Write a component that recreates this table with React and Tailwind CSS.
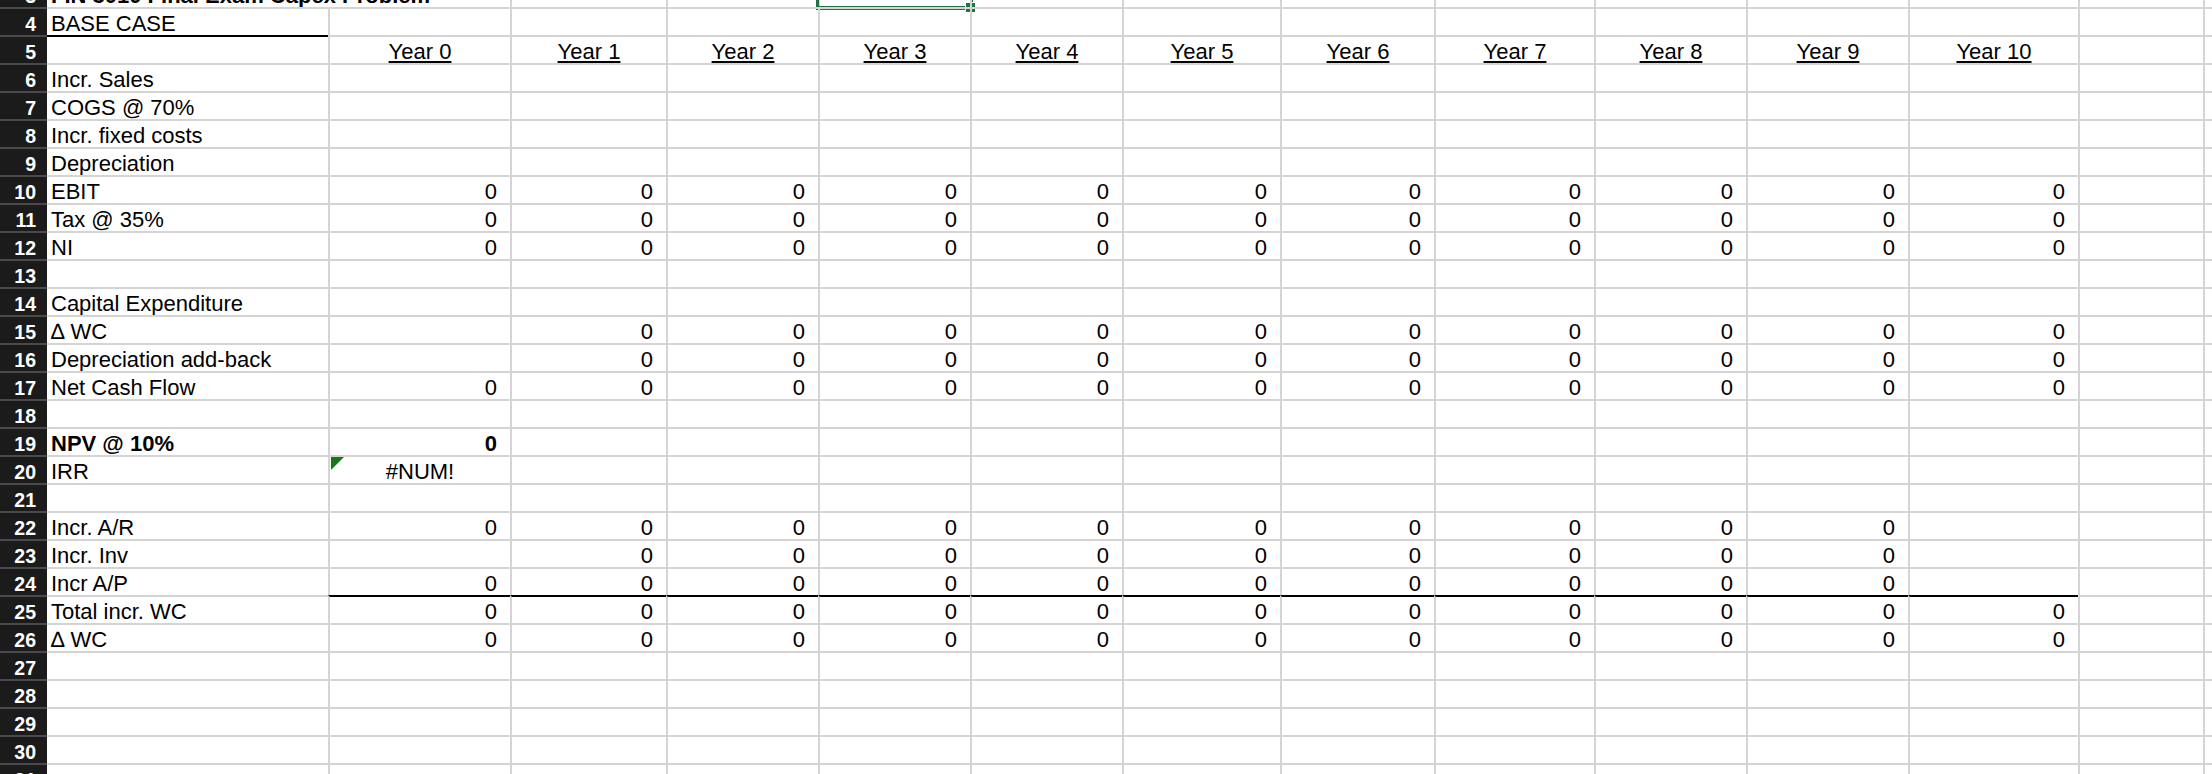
import React from "react";

const COLW = [
  "w-[281px]",
  "w-[182px]",
  "w-[156px]",
  "w-[152px]",
  "w-[152px]",
  "w-[152px]",
  "w-[158px]",
  "w-[154px]",
  "w-[160px]",
  "w-[152px]",
  "w-[162px]",
  "w-[170px]",
  "w-[125px]",
  "w-[9px]",
];

const z = (n) => Array(n).fill("0");
const nul = (n) => Array(n).fill(null);

const ROWS = [
  { n: 3, title: "FIN 3010 Final Exam Capex Problem" },
  { n: 4, label: "BASE CASE" },
  { n: 5, years: true, blackA: true },
  { n: 6, label: "Incr. Sales" },
  { n: 7, label: "COGS @ 70%" },
  { n: 8, label: "Incr. fixed costs" },
  { n: 9, label: "Depreciation" },
  { n: 10, label: "EBIT", vals: z(11) },
  { n: 11, label: "Tax @ 35%", vals: z(11) },
  { n: 12, label: "NI", vals: z(11) },
  { n: 13 },
  { n: 14, label: "Capital Expenditure" },
  { n: 15, label: "\u2206 WC", vals: [null, ...z(10)] },
  { n: 16, label: "Depreciation add-back", vals: [null, ...z(10)] },
  { n: 17, label: "Net Cash Flow", vals: z(11) },
  { n: 18 },
  { n: 19, label: "NPV @ 10%", bold: true, vals: ["0", ...nul(10)] },
  { n: 20, label: "IRR", irr: true },
  { n: 21 },
  { n: 22, label: "Incr. A/R", vals: ["0", ...z(9), null] },
  { n: 23, label: "Incr. Inv", vals: [null, ...z(9), null] },
  { n: 24, label: "Incr A/P", vals: ["0", ...z(9), null] },
  { n: 25, label: "Total incr. WC", vals: z(11), blackBL: true },
  { n: 26, label: "\u2206 WC", vals: z(11) },
  { n: 27 },
  { n: 28 },
  { n: 29 },
  { n: 30 },
  { n: 31 },
];

function Row({ r }) {
  const cells = [];
  cells.push(
    <div
      key="A"
      className={
        "h-[28px] shrink-0 flex items-end pl-[4px] whitespace-nowrap border-t-2 " +
        COLW[0] +
        " " +
        (r.blackA ? "border-t-black" : "border-t-[#d4d4d4]")
      }
    >
      {r.title ? (
        <span className="font-bold leading-[22px]">{r.title}</span>
      ) : (
        <span className={"leading-[22px] " + (r.bold ? "font-bold" : "")}>
          {r.label || ""}
        </span>
      )}
    </div>
  );
  for (let i = 1; i < 14; i++) {
    const inData = i >= 1 && i <= 11;
    const topBlack = r.blackBL && inData;
    const leftCls =
      r.title && i === 1 ? "border-l-transparent" : "border-l-[#d4d4d4]";
    const topCls = topBlack ? "border-t-black" : "border-t-[#d4d4d4]";
    let content = null;
    let justify = "justify-end pr-[13px]";
    let extra = null;
    if (r.years && inData) {
      content = (
        <span className="underline underline-offset-[2px] leading-[22px]">
          {"Year " + (i - 1)}
        </span>
      );
      justify = "justify-center";
    } else if (r.vals && inData && r.vals[i - 1] != null) {
      content = (
        <span className={"leading-[22px] " + (r.bold ? "font-bold" : "")}>
          {r.vals[i - 1]}
        </span>
      );
    } else if (r.irr && i === 1) {
      content = <span className="leading-[22px]">#NUM!</span>;
      justify = "justify-center";
      extra = (
        <div className="absolute left-[1px] top-[0px] w-0 h-0 border-t-[13px] border-r-[13px] border-t-[#157a15] border-r-transparent" />
      );
    }
    if (r.title && i === 4) {
      extra = (
        <>
          <div className="absolute left-[-4px] top-[-10px] w-[157px] h-[39px] border-[3px] border-b-4 border-[#217346]" />
          <div className="absolute left-[145px] top-[21px] w-[11px] h-[11px] bg-[#217346] border border-white" />
        </>
      );
    }
    cells.push(
      <div
        key={i}
        className={
          "relative h-[28px] shrink-0 flex items-end whitespace-nowrap border-t-2 border-l-2 " +
          COLW[i] +
          " " +
          leftCls +
          " " +
          topCls +
          " " +
          justify
        }
      >
        {extra}
        {content}
      </div>
    );
  }
  return (
    <div className="flex h-[28px]">
      <div className="w-[47px] h-[28px] shrink-0 bg-[#1b1b1b] border-t-2 border-t-[#4a4a4a] flex items-end justify-end pr-[11px] text-white font-bold text-[19.5px]">
        <span className="leading-[22px]">{r.n}</span>
      </div>
      {cells}
    </div>
  );
}

export default function App() {
  return (
    <div className="w-[2212px] h-[774px] overflow-hidden bg-white text-black font-['Liberation_Sans',Arial,sans-serif] text-[22px]">
      <div className="-mt-[21px]">
        {ROWS.map((r) => (
          <Row key={r.n} r={r} />
        ))}
      </div>
    </div>
  );
}
